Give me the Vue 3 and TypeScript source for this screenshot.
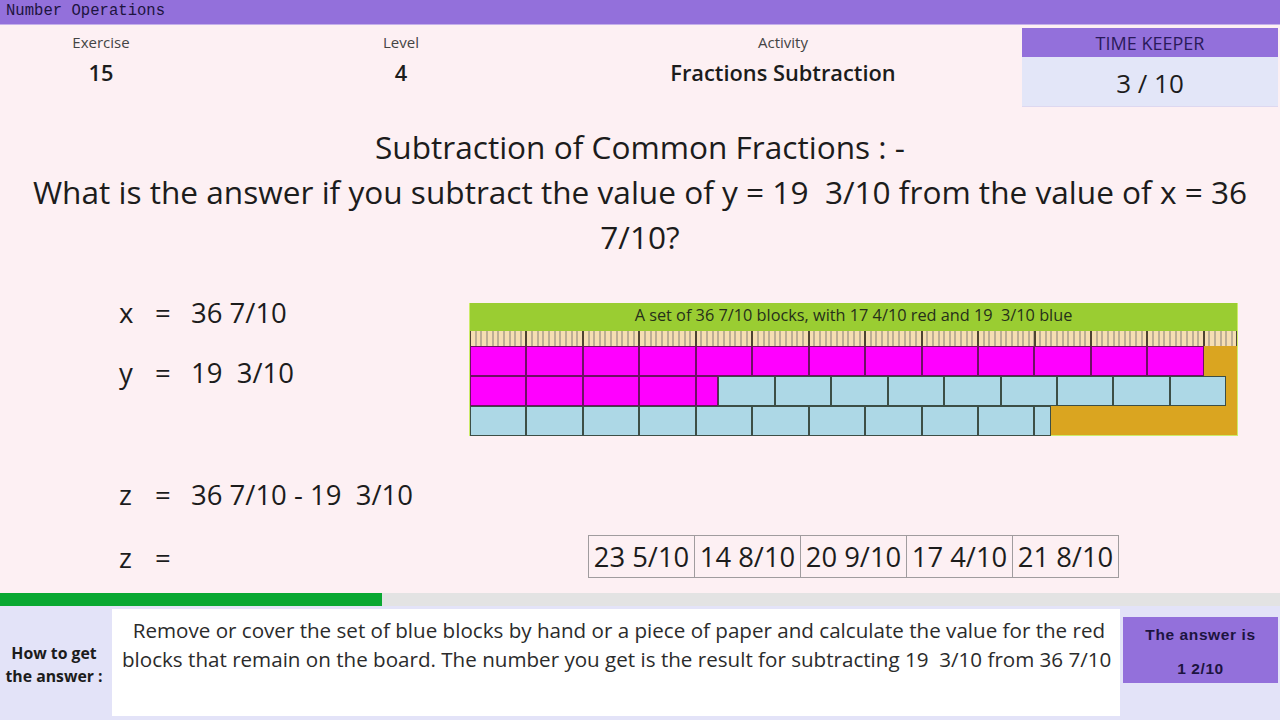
<script setup lang="ts">
interface Block {
  id: number
  units: number
  kind: 'red' | 'blue'
}

const UNIT = 56.45

// 17 4/10 red and 19 3/10 blue, laid out over 13 units per row
const rows: Block[][] = [
  Array.from({ length: 13 }, (_, i) => ({ id: i, units: 1, kind: 'red' as const })),
  [
    ...Array.from({ length: 4 }, (_, i) => ({ id: i, units: 1, kind: 'red' as const })),
    { id: 4, units: 0.4, kind: 'red' as const },
    ...Array.from({ length: 9 }, (_, i) => ({ id: i + 5, units: 1, kind: 'blue' as const })),
  ],
  [
    ...Array.from({ length: 10 }, (_, i) => ({ id: i, units: 1, kind: 'blue' as const })),
    { id: 10, units: 0.3, kind: 'blue' as const },
  ],
]

const options = ['23 5/10', '14 8/10', '20 9/10', '17 4/10', '21 8/10']
</script>

<template>
  <div class="page">
    <div class="titlebar">Number Operations</div>

    <div class="info">
      <div class="info-cell">
        <span class="info-label">Exercise</span>
        <strong>15</strong>
      </div>
      <div class="info-cell">
        <span class="info-label">Level</span>
        <strong>4</strong>
      </div>
      <div class="info-cell">
        <span class="info-label">Activity</span>
        <strong>Fractions Subtraction</strong>
      </div>
      <div class="timer">
        <div class="timer-head">TIME KEEPER</div>
        <div class="timer-value">3 / 10</div>
      </div>
    </div>

    <div class="question">
      Subtraction of Common Fractions : -<br />
      What is the answer if you subtract the value of y = 19&nbsp; 3/10 from the value of x = 36<br />
      7/10?
    </div>

    <div class="work">
      <div class="equations">
        <div class="eq eq-x"><i>x</i><b>=</b><span>36 7/10</span></div>
        <div class="eq eq-y"><i>y</i><b>=</b><span>19&nbsp; 3/10</span></div>
        <div class="eq eq-z"><i>z</i><b>=</b><span>36 7/10 - 19&nbsp; 3/10</span></div>
        <div class="eq eq-r"><i>z</i><b>=</b></div>
      </div>
      <div class="side">
        <div class="board">
          <div class="board-title">A set of 36 7/10 blocks, with 17 4/10 red and 19&nbsp; 3/10 blue</div>
          <div class="ruler"></div>
          <div v-for="(row, r) in rows" :key="r" class="row">
            <div
              v-for="b in row"
              :key="b.id"
              class="block"
              :class="b.kind"
              :style="{ width: b.units * UNIT + 'px' }"
            ></div>
          </div>
        </div>
        <div class="options">
          <div v-for="o in options" :key="o" class="option">{{ o }}</div>
        </div>
      </div>
    </div>

    <div class="progress"><div class="progress-fill"></div></div>

    <div class="help">
      <div class="help-label">How to get<br />the answer :</div>
      <div class="help-text">
        &nbsp;&nbsp;Remove or cover the set of blue blocks by hand or a piece of paper and calculate the value for the red<br />
        blocks that remain on the board. The number you get is the result for subtracting 19&nbsp; 3/10 from 36 7/10
      </div>
      <div class="answer">
        <div>The answer is</div>
        <div>1 2/10</div>
      </div>
    </div>
  </div>
</template>

<style>
html,
body {
  margin: 0;
  background: #fdf0f3;
}
</style>

<style scoped>
.page {
  width: 1280px;
  height: 720px;
  overflow: hidden;
  display: flex;
  flex-direction: column;
  background: #fdf0f3;
  color: #1c1c1c;
  font-family: 'Open Sans', 'Noto Sans', sans-serif;
}
.titlebar {
  height: 24px;
  flex: none;
  padding-left: 6px;
  background: #9370db;
  border-bottom: 1px solid #c5b0ea;
  color: #1d1440;
  font-family: 'Liberation Mono', monospace;
  font-size: 15.6px;
  line-height: 22px;
}
.info {
  height: 82px;
  flex: none;
  display: grid;
  grid-template-columns: 202px 398px 366px 1fr;
  padding-top: 1px;
}
.info-cell {
  display: flex;
  flex-direction: column;
  align-items: center;
  padding-top: 5px;
}
.info-label {
  font-size: 15px;
  line-height: 22px;
  color: #444;
}
.info-cell strong {
  font-size: 21.8px;
  font-weight: 600;
  line-height: 39px;
}
.timer {
  height: 78px;
  margin: 2px 2px 0 56px;
  display: flex;
  flex-direction: column;
  background: #e3e6f8;
  border-bottom: 1px solid #ddd8f0;
}
.timer-head {
  height: 29px;
  background: #9370db;
  text-align: center;
  font-size: 18px;
  line-height: 30px;
  color: #2a1a5a;
}
.timer-value {
  text-align: center;
  font-size: 26px;
  font-weight: 500;
  line-height: 52px;
}
.question {
  height: 153px;
  flex: none;
  padding-top: 16px;
  box-sizing: border-box;
  text-align: center;
  font-size: 31.6px;
  line-height: 45px;
  white-space: nowrap;
}
.work {
  height: 290px;
  flex: none;
  display: flex;
  margin-top: 42px;
}
.equations {
  width: 469px;
  flex: none;
  padding-left: 119px;
  box-sizing: border-box;
}
.eq {
  display: flex;
  align-items: center;
  height: 40px;
  font-size: 27.5px;
}
.eq i {
  font-style: normal;
  width: 36px;
}
.eq b {
  font-weight: 400;
  width: 36px;
}
.eq-x {
  margin-top: -11px;
}
.eq-y {
  margin-top: 20px;
}
.eq-z {
  margin-top: 82px;
}
.eq-r {
  margin-top: 23px;
}
.side {
  flex: 1;
}
.board {
  width: 769px;
  height: 133px;
  box-sizing: border-box;
  background: #daa520;
  border: 1px solid #cdec6a;
  border-top: 0;
}
.board-title {
  height: 28px;
  background: #9acd32;
  text-align: center;
  font-size: 16.3px;
  line-height: 24px;
  color: #26301a;
}
.ruler {
  height: 15px;
  background-color: #f5deb3;
  background-position: -1px 0;
  background-image:
    repeating-linear-gradient(90deg, #4d4432 0 2px, transparent 2px 56.45px),
    repeating-linear-gradient(90deg, #bdae94 0 2px, transparent 2px 5.645px);
}
.row {
  height: 30px;
  display: flex;
}
.block {
  height: 30px;
  flex: none;
  box-sizing: border-box;
  border: 1px solid;
}
.red {
  background: #ff00ff;
  border-color: #6e1064;
}
.blue {
  background: #add8e6;
  border-color: #3c4e46;
}
.options {
  display: flex;
  margin: 99px 0 0 120px;
}
.option {
  width: 107px;
  height: 43px;
  box-sizing: border-box;
  border: 1px solid #a09c9e;
  margin-left: -1px;
  text-align: center;
  font-size: 27.4px;
  line-height: 41px;
  white-space: nowrap;
}
.progress {
  height: 13px;
  flex: none;
  background: #e3e3e3;
}
.progress-fill {
  width: 382px;
  height: 100%;
  background: #0aa832;
}
.help {
  flex: 1;
  display: flex;
  background: #e3e3f8;
  padding-top: 3px;
}
.help-label {
  width: 108px;
  margin-right: 4px;
  flex: none;
  padding-top: 33px;
  box-sizing: border-box;
  text-align: center;
  font-size: 15.8px;
  font-weight: 700;
  line-height: 23px;
  white-space: nowrap;
}
.help-text {
  width: 1008px;
  height: 107px;
  flex: none;
  box-sizing: border-box;
  padding: 7px 0 0 10px;
  background: #fff;
  font-size: 20.6px;
  line-height: 29px;
  color: #2b2b2b;
  white-space: nowrap;
}
.answer {
  width: 155px;
  height: 66px;
  flex: none;
  margin: 8px 0 0 3px;
  padding-top: 1px;
  box-sizing: border-box;
  background: #9370db;
  text-align: center;
  font-family: 'Liberation Sans', sans-serif;
  font-size: 15.5px;
  font-weight: 700;
  letter-spacing: 0.6px;
  line-height: 34px;
  color: #1d1440;
}
</style>
